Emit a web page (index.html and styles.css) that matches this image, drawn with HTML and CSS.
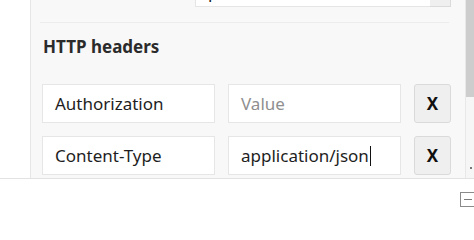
FILE: index.html
```html
<!DOCTYPE html>
<html lang="en">
<head>
<meta charset="utf-8">
<title>HTTP headers</title>
<link rel="stylesheet" href="styles.css">
</head>
<body>
<div class="app">
  <div class="pane">
    <div class="gutter"></div>
    <div class="main">
      <div class="content">
        <div class="top-row">
          <div class="top-input">p</div>
          <div class="top-btn"></div>
        </div>
        <div class="sep"></div>
        <h2 class="title">HTTP headers</h2>
        <div class="row">
          <div class="field">Authorization</div>
          <div class="field placeholder">Value</div>
          <button class="remove">X</button>
        </div>
        <div class="row">
          <div class="field">Content-Type</div>
          <div class="field">application/json<span class="caret"></span></div>
          <button class="remove">X</button>
        </div>
      </div>
    </div>
    <div class="scrollbar"><div class="thumb"></div><div class="arrow"></div></div>
  </div>
  <div class="footer">
    <svg class="collapse-icon" width="16" height="15" viewBox="0 0 16 15">
      <rect x="0.5" y="0.5" width="15" height="14" fill="#fff" stroke="#8a8a8a"/>
      <line x1="4" y1="7.5" x2="12" y2="7.5" stroke="#7a7a7a"/>
    </svg>
  </div>
</div>
</body>
</html>
```
FILE: styles.css
```css
* { box-sizing: border-box; }
html, body { margin: 0; padding: 0; background: #fff; }
body { font-family: "Noto Sans", "Open Sans", sans-serif; color: #222; }
.app { width: 474px; height: 214px; overflow: hidden; display: flex; flex-direction: column; }
.pane { height: 179px; display: flex; border-bottom: 1px solid #e2e2e2; flex: none; }
.gutter { width: 30px; flex: none; background: #fff; }
.main { flex: 1; background: #f8f8f8; border-left: 1px solid #e6e6e6; overflow: hidden; }
.content { padding: 0 14px 0 11px; margin-top: -32px; }
.top-row { display: flex; justify-content: flex-end; height: 39px; }
.top-input { width: 235px; height: 39px; background: #fff; border: 1px solid #e5e5e5; border-right: none; font-size: 17px; line-height: 22px; padding: 12px 12px 0; color: #222; overflow: hidden; }
.top-btn { width: 21px; height: 39px; background: #efefef; border: 1px solid #dadada; border-left: none; }
.sep { height: 1px; background: #ececec; margin: 15px 2px 0 -2px; }
.title { margin: 12px 0 0 1px; font-size: 17px; line-height: 24px; font-weight: 700; color: #2b2b2b; }
.row { display: flex; gap: 13px; margin-top: 25px; }
.row + .row { margin-top: 13px; }
.field { width: 173px; height: 39px; background: #fff; border: 1px solid #e6e6e6; font-size: 17px; line-height: 23px; padding: 7px 12px; color: #1e1e1e; white-space: nowrap; display: flex; align-items: center; }
.field.placeholder { color: #8f8f8f; }
.caret { display: inline-block; width: 1px; height: 20px; background: #111; margin-left: 1px; }
.remove { width: 37px; height: 39px; background: #efefef; border: 1px solid #dadada; border-radius: 3px; font-family: "Noto Sans", sans-serif; font-size: 17px; font-weight: 700; color: #111; padding: 0; }
.scrollbar { width: 9px; flex: none; background: #f6f6f6; border-left: 1px solid #e8e8e8; position: relative; }
.thumb { height: 97px; background: #cdcdcd; }
.arrow { position: absolute; left: 4px; top: 167px; width: 2px; height: 2px; background: #777; }
.footer { flex: 1; position: relative; }
.collapse-icon { position: absolute; left: 460px; top: 13px; }
```
